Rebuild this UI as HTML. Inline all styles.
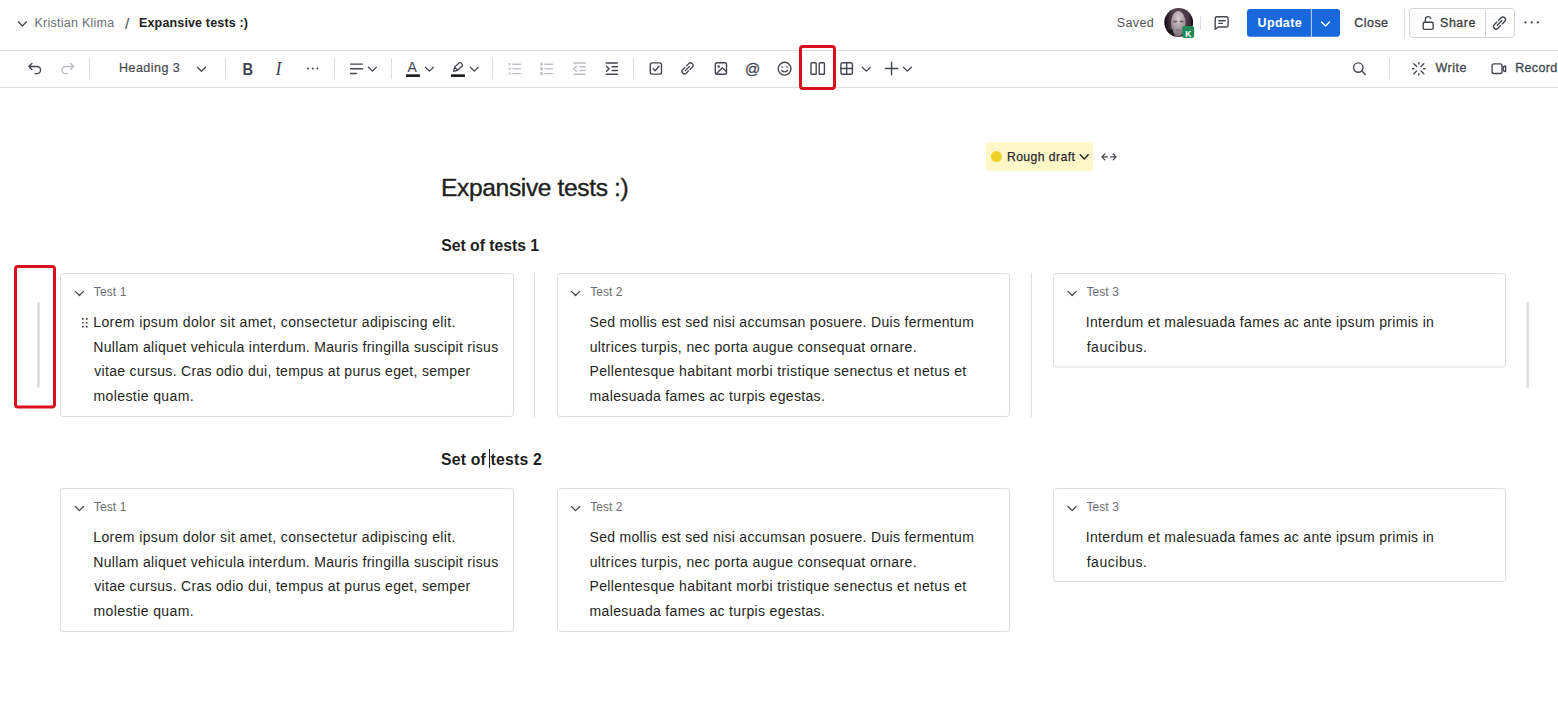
<!DOCTYPE html>
<html lang="en"><head><meta charset="utf-8"><title>Expansive tests :)</title>
<style>
html,body{margin:0;padding:0;background:#fff;}
body{width:1558px;height:704px;position:relative;overflow:hidden;font-family:"Liberation Sans",sans-serif;}
.t{position:absolute;white-space:pre;font-family:"Liberation Sans",sans-serif;}
svg#art{position:absolute;left:0;top:0;width:1558px;height:704px;}
svg#art text{font-family:"Liberation Sans",sans-serif;}
.ic{fill:none;stroke:#44474f;stroke-width:1.4;stroke-linecap:round;stroke-linejoin:round;}
.dis{fill:none;stroke:#bcbec4;stroke-width:1.4;stroke-linecap:round;stroke-linejoin:round;}
.sep{stroke:#dddddf;stroke-width:1;fill:none;}
.card{fill:#fff;stroke:#dcdcdd;stroke-width:1;}
.red{fill:none;stroke:#d9111f;stroke-width:3;}
.ch{stroke-width:1.3;}

</style></head>
<body>
<svg id="art" width="1558" height="704" viewBox="0 0 1558 704">
<!-- bars -->
<path class="sep" d="M0 50.5H1558M0 87.5H1558"/>
<!-- breadcrumb chevron -->
<path class="ic" d="M18.4 21.8 L22.4 25.9 L26.4 21.8"/>
<!-- avatar -->
<defs>
<clipPath id="avc"><circle cx="1178.7" cy="22.5" r="14.4"/></clipPath>
<linearGradient id="avbg" x1="0" y1="0" x2="1" y2="0"><stop offset="0" stop-color="#0c080c"/><stop offset="0.12" stop-color="#2b2029"/><stop offset="0.3" stop-color="#55444f"/><stop offset="0.8" stop-color="#4a3a46"/><stop offset="0.95" stop-color="#1a1218"/><stop offset="1" stop-color="#0c080c"/></linearGradient>
<radialGradient id="face" cx="0.5" cy="0.3" r="0.7"><stop offset="0" stop-color="#d6cdd1"/><stop offset="0.45" stop-color="#b4a7ad"/><stop offset="1" stop-color="#7d6f77"/></radialGradient>
</defs>
<g clip-path="url(#avc)">
<rect x="1164" y="8" width="30" height="30" fill="url(#avbg)"/>
<ellipse cx="1178.3" cy="23.5" rx="7.3" ry="12.6" fill="url(#face)"/>
<ellipse cx="1175.2" cy="21.6" rx="2.1" ry="1" fill="#5d5058" opacity="0.85"/>
<ellipse cx="1181.6" cy="21.6" rx="2.1" ry="1" fill="#5d5058" opacity="0.85"/>
<ellipse cx="1178.6" cy="30.2" rx="2.6" ry="0.8" fill="#6f6068" opacity="0.7"/>
<path d="M1164 30 L1172.5 29.5 L1175 38 L1164 38 Z" fill="#1c171d"/>
</g>
<rect x="1182.2" y="25.9" width="12" height="12.1" rx="2.5" fill="#20895b"/>
<path class="sep" d="M1200.5 16V30"/>
<!-- comment icon -->
<path class="ic" d="M1215.2 18.6 a1.8 1.8 0 0 1 1.8 -1.8 h9.3 a1.8 1.8 0 0 1 1.8 1.8 v6.6 a1.8 1.8 0 0 1 -1.8 1.8 h-7.9 l-3.2 2.3 z M1218.8 20.7 h6.4 M1218.8 23.4 h3.6"/>
<!-- update button -->
<rect x="1247" y="9" width="93" height="27.8" rx="3" fill="#1868db"/>
<rect x="1310.9" y="9" width="1" height="27.8" fill="#bcd2f5"/>
<path d="M1321.5 22 L1325.5 26 L1329.5 22" fill="none" stroke="#fff" stroke-width="1.4" stroke-linecap="round" stroke-linejoin="round"/>
<path class="sep" d="M1404.5 9V37"/>
<!-- share box -->
<rect x="1409.5" y="8.5" width="105" height="29" rx="3.5" fill="#fff" stroke="#d4d5d8"/>
<path d="M1485.5 10V37" stroke="#d4d5d8" fill="none"/>
<path class="ic" d="M1424.6 22.2 h7.2 a1.4 1.4 0 0 1 1.4 1.4 v4.4 a1.4 1.4 0 0 1 -1.4 1.4 h-7.2 a1.4 1.4 0 0 1 -1.4 -1.4 v-4.4 a1.4 1.4 0 0 1 1.4 -1.4 z M1425.4 22 v-2.6 a2.8 2.8 0 0 1 5.4 -1"/>
<g transform="translate(1499.5 23.1) rotate(-45)"><path class="ic" d="M-1.2 -2.6 h-3.6 a2.6 2.6 0 0 0 0 5.2 h3.6 M1.2 2.6 h3.6 a2.6 2.6 0 0 0 0 -5.2 h-3.6 M-3.2 0 h6.4" /></g>
<g fill="#44474f"><circle cx="1525.5" cy="22.4" r="1.15"/><circle cx="1531.7" cy="22.4" r="1.15"/><circle cx="1537.8" cy="22.4" r="1.15"/></g>

<!-- toolbar -->
<path class="ic" d="M31.9 63.6 L28.9 66.5 L31.9 69.4 M29.2 66.5 H37 a3.55 3.55 0 0 1 0 7.1 H35"/>
<path class="dis" d="M70.6 63.6 L73.6 66.5 L70.6 69.4 M73.3 66.5 H65.5 a3.55 3.55 0 0 0 0 7.1 H67.5"/>
<path class="sep" d="M89.5 58V79M225.5 58V79M334.5 58V79M391.5 58V79M492.5 58V79M633.5 58V79M1389.5 58V79"/>
<path class="ic ch" d="M197.4 67.3 L201.5 71.2 L205.6 67.3"/>
<text x="242.6" y="74.6" font-size="16.6" font-weight="700" fill="#44474f" textLength="10.6" lengthAdjust="spacingAndGlyphs">B</text>
<text x="275.6" y="74.6" font-size="18" font-style="italic" fill="#44474f" style="font-family:'Liberation Serif',serif">I</text>
<g fill="#44474f"><circle cx="308" cy="68.5" r="1"/><circle cx="312.7" cy="68.5" r="1"/><circle cx="317.4" cy="68.5" r="1"/></g>
<path class="ic" d="M350.6 64.1 H362.6 M350.6 68.8 H362.6 M350.6 73.5 H356.4"/>
<path class="ic ch" d="M368.5 67.3 L372.4 71.1 L376.3 67.3"/>
<text x="407.6" y="71.6" font-size="14" fill="#44474f">A</text>
<rect x="406" y="74.3" width="13.9" height="2.7" fill="#1e1f21"/>
<path class="ic ch" d="M425.5 67.3 L429.4 71.1 L433.3 67.3"/>
<!-- highlighter -->
<path class="ic" style="stroke-width:1.25" d="M453.6 71.4 L454.7 66.9 L459.3 62.8 a1.1 1.1 0 0 1 1.6 0.1 L462.2 64.4 a1.1 1.1 0 0 1 -0.1 1.6 L457.6 70.3 Z M454.7 66.9 L457.6 70.3"/>
<rect x="451" y="74.3" width="13.9" height="2.7" fill="#1e1f21"/>
<path class="ic ch" d="M470.4 67.3 L474.3 71.1 L478.2 67.3"/>
<!-- bullets -->
<g fill="#bcbec4"><circle cx="509.5" cy="64.2" r="1.1"/><circle cx="509.5" cy="68.9" r="1.1"/><circle cx="509.5" cy="73.6" r="1.1"/></g>
<path class="dis" d="M512.9 64.2 H520.4 M512.9 68.9 H520.4 M512.9 73.6 H520.4"/>
<g fill="#bcbec4"><rect x="540.4" y="62.4" width="2.2" height="3.4" rx="0.6"/><rect x="540.4" y="67.1" width="2.2" height="3.4" rx="0.6"/><rect x="540.4" y="71.9" width="2.2" height="3.4" rx="0.6"/></g>
<path class="dis" d="M544.9 64.2 H552.4 M544.9 68.9 H552.4 M544.9 73.6 H552.4"/>
<path class="dis" d="M573.8 63 H585.2 M580 66.8 H585.2 M580 70.5 H585.2 M573.8 74.3 H585.2 M576.4 66.2 L573.7 68.7 L576.4 71.2"/>
<path class="ic" d="M606.2 63 H617.4 M612.2 66.8 H617.4 M612.2 70.5 H617.4 M606.2 74.3 H617.4 M606.4 66.2 L609.1 68.7 L606.4 71.2"/>
<!-- checkbox -->
<rect class="ic" x="650.3" y="62.9" width="11.2" height="11.2" rx="1.8"/>
<path class="ic" d="M653.2 68.7 L655.2 70.7 L658.9 66.3"/>
<g transform="translate(687.5 68.4) rotate(-45)"><path class="ic" style="stroke-width:1.3" d="M-1.2 -2.5 h-3.1 a2.5 2.5 0 0 0 0 5 h3.1 M1.2 2.5 h3.1 a2.5 2.5 0 0 0 0 -5 h-3.1 M-2.9 0 h5.8"/></g>
<rect class="ic" x="715.3" y="62.8" width="11.2" height="11.4" rx="1.8"/>
<circle cx="718.6" cy="66.5" r="1.25" fill="#44474f"/>
<path class="ic" d="M716.6 73.6 L722.4 67.8 L726.3 71.6"/>
<text x="745.1" y="73.6" font-size="15" fill="#44474f" stroke="#44474f" stroke-width="0.3">@</text>
<circle class="ic" cx="784.6" cy="68.7" r="6.4"/>
<g fill="#44474f"><circle cx="782.4" cy="67" r="0.85"/><circle cx="786.9" cy="67" r="0.85"/></g>
<path class="ic" d="M781.7 70.4 Q784.6 73.4 787.6 70.4"/>
<rect class="ic" x="811" y="62.8" width="5.2" height="11.5" rx="0.8"/>
<rect class="ic" x="819.2" y="62.8" width="5.2" height="11.5" rx="0.8"/>
<rect class="red" x="800.5" y="46.5" width="34" height="42" rx="2.5"/>
<rect class="ic" x="840.9" y="62.8" width="11.5" height="11.5" rx="1.8"/>
<path class="ic" d="M846.65 62.8 V74.3 M840.9 68.55 H852.4"/>
<path class="ic ch" d="M862.3 67.2 L866.3 71.1 L870.3 67.2"/>
<path class="ic" d="M885.4 68.5 H897.7 M891.55 62.3 V74.7"/>
<path class="ic ch" d="M903.4 67.2 L907.4 71.1 L911.4 67.2"/>
<circle class="ic" cx="1358.3" cy="67.6" r="4.7"/>
<path class="ic" d="M1361.8 71.1 L1365.3 74.5"/>
<!-- write icon -->
<g transform="translate(1418.8 68.8)"><path class="ic" d="M0 -6.2 V-4.8 M0 6.2 V4.8 M-6.2 0 H-4.8 M6.2 0 H4.8 M-5 -5 L-2.2 -2.2 M5 -5 L2.2 -2.2 M-5 5 L-2.2 2.2 M5 5 L2.2 2.2"/></g>
<!-- record -->
<rect class="ic" x="1492.1" y="63.9" width="9.9" height="9.6" rx="1.8"/>
<path class="ic" d="M1503.2 67 L1505.6 65.9 V71.6 L1503.2 70.5 Z"/>

<!-- content -->
<rect x="986" y="142" width="107" height="29" rx="3" fill="#fef7c8"/>
<circle cx="996.4" cy="156.5" r="5.5" fill="#eed12b"/>
<path d="M1080.2 154.8 L1084.2 158.9 L1088.2 154.8" fill="none" stroke="#292a2e" stroke-width="1.5" stroke-linecap="round" stroke-linejoin="round"/>
<path class="ic" style="stroke-width:1.2" d="M1107.4 156.9 H1102.2 M1104.8 154 L1101.9 156.9 L1104.8 159.8 M1110.6 156.9 H1115.8 M1113.2 154 L1116.1 156.9 L1113.2 159.8"/>

<!-- row 1 -->
<rect class="red" x="15.5" y="266.5" width="39" height="140.5" rx="2.5"/>
<rect x="37.2" y="302" width="2.6" height="85.7" rx="1.3" fill="#dddddd"/>
<rect x="1526.4" y="302" width="2.6" height="85.7" rx="1.3" fill="#dddddd"/>
<path d="M534.5 273V417 M1031.5 273V417" stroke="#dedede" fill="none"/>
<rect class="card" x="60.5" y="273.5" width="453" height="143" rx="3"/>
<rect class="card" x="557.5" y="273.5" width="452" height="143" rx="3"/>
<rect class="card" x="1053.5" y="273.5" width="452" height="93.5" rx="3"/>
<path class="ic" style="stroke-width:1.25" d="M75.3 291.4 L79.4 295.5 L83.5 291.4 M571.5 291.4 L575.6 295.5 L579.7 291.4 M1068 291.4 L1072.1 295.5 L1076.2 291.4"/>
<g fill="#33353a"><rect x="82" y="318" width="1.7" height="1.7" rx="0.5"/><rect x="85.9" y="318" width="1.7" height="1.7" rx="0.5"/><rect x="82" y="321.9" width="1.7" height="1.7" rx="0.5"/><rect x="85.9" y="321.9" width="1.7" height="1.7" rx="0.5"/><rect x="82" y="325.8" width="1.7" height="1.7" rx="0.5"/><rect x="85.9" y="325.8" width="1.7" height="1.7" rx="0.5"/></g>
<!-- row 2 -->
<rect class="card" x="60.5" y="488.5" width="453" height="143" rx="3"/>
<rect class="card" x="557.5" y="488.5" width="452" height="143" rx="3"/>
<rect class="card" x="1053.5" y="488.5" width="452" height="93" rx="3"/>
<path class="ic" style="stroke-width:1.25" d="M75.3 506.5 L79.4 510.6 L83.5 506.5 M571.5 506.5 L575.6 510.6 L579.7 506.5 M1068 506.5 L1072.1 510.6 L1076.2 506.5"/>
<rect x="489" y="449" width="1" height="18.6" fill="#1e1f21"/>
</svg>

<span class="t" id="bc1" style="left:34.42px;top:16px;font-size:12.5px;line-height:14px;font-weight:400;color:#6b6e76;letter-spacing:0.258px;">Kristian Klima</span>
<span class="t" id="bc2" style="left:125.03px;top:15px;font-size:15.4px;line-height:17px;font-weight:400;color:#44474f;letter-spacing:0.000px;">/</span>
<span class="t" id="bc3" style="left:138.99px;top:16px;font-size:12.5px;line-height:14px;font-weight:700;color:#1e1f21;letter-spacing:0.156px;">Expansive tests :)</span>
<span class="t" id="saved" style="left:1116.83px;top:16px;font-size:12.5px;line-height:14px;font-weight:400;color:#505258;letter-spacing:0.360px;">Saved</span>
<span class="t" id="upd" style="left:1257.55px;top:16px;font-size:12.5px;line-height:14px;font-weight:700;color:#ffffff;letter-spacing:0.343px;">Update</span>
<span class="t" id="close" style="left:1354.27px;top:16px;font-size:12.5px;line-height:14px;font-weight:400;color:#3b3d42;letter-spacing:0.452px;-webkit-text-stroke:0.3px #3b3d42;">Close</span>
<span class="t" id="share" style="left:1440.06px;top:16px;font-size:12.5px;line-height:14px;font-weight:400;color:#3b3d42;letter-spacing:0.508px;-webkit-text-stroke:0.3px #3b3d42;">Share</span>
<span class="t" id="badge" style="left:1185.24px;top:29px;font-size:8.4px;line-height:10px;font-weight:700;color:#ffffff;letter-spacing:0.000px;">K</span>
<span class="t" id="h3sel" style="left:118.97px;top:61px;font-size:12.5px;line-height:14px;font-weight:400;color:#44474f;letter-spacing:0.479px;-webkit-text-stroke:0.2px #44474f;">Heading 3</span>
<span class="t" id="write" style="left:1435.39px;top:61px;font-size:12.5px;line-height:14px;font-weight:400;color:#44474f;letter-spacing:0.563px;-webkit-text-stroke:0.3px #44474f;">Write</span>
<span class="t" id="record" style="left:1515.17px;top:61px;font-size:12.5px;line-height:14px;font-weight:400;color:#44474f;letter-spacing:0.335px;-webkit-text-stroke:0.3px #44474f;">Record</span>
<span class="t" id="rough" style="left:1006.90px;top:150px;font-size:12.2px;line-height:14px;font-weight:400;color:#292a2e;letter-spacing:0.441px;-webkit-text-stroke:0.25px #292a2e;">Rough draft</span>
<span class="t" id="title" style="left:441.10px;top:174px;font-size:24.6px;line-height:27px;font-weight:400;color:#1e1f21;letter-spacing:-0.383px;-webkit-text-stroke:0.35px #1e1f21;">Expansive tests :)</span>
<span class="t" id="set1" style="left:441.25px;top:237px;font-size:15.8px;line-height:17px;font-weight:700;color:#1e1f21;letter-spacing:-0.036px;">Set of tests 1</span>
<span class="t" id="set2" style="left:441.01px;top:451px;font-size:15.8px;line-height:17px;font-weight:700;color:#1e1f21;letter-spacing:0.187px;">Set of tests 2</span>
<span class="t" id="lab00" style="left:93.83px;top:285px;font-size:12px;line-height:14px;font-weight:400;color:#6b6e76;letter-spacing:0.103px;">Test 1</span>
<span class="t" id="p000" style="left:93.28px;top:314px;font-size:14px;line-height:16px;font-weight:400;color:#1e1f21;letter-spacing:0.389px;">Lorem ipsum dolor sit amet, consectetur adipiscing elit.</span>
<span class="t" id="p001" style="left:93.28px;top:339px;font-size:14px;line-height:16px;font-weight:400;color:#1e1f21;letter-spacing:0.321px;">Nullam aliquet vehicula interdum. Mauris fringilla suscipit risus</span>
<span class="t" id="p002" style="left:94.29px;top:363px;font-size:14px;line-height:16px;font-weight:400;color:#1e1f21;letter-spacing:0.306px;">vitae cursus. Cras odio dui, tempus at purus eget, semper</span>
<span class="t" id="p003" style="left:93.44px;top:388px;font-size:14px;line-height:16px;font-weight:400;color:#1e1f21;letter-spacing:0.409px;">molestie quam.</span>
<span class="t" id="lab01" style="left:590.20px;top:285px;font-size:12px;line-height:14px;font-weight:400;color:#6b6e76;letter-spacing:0.066px;">Test 2</span>
<span class="t" id="p010" style="left:589.51px;top:314px;font-size:14px;line-height:16px;font-weight:400;color:#1e1f21;letter-spacing:0.310px;">Sed mollis est sed nisi accumsan posuere. Duis fermentum</span>
<span class="t" id="p011" style="left:589.70px;top:339px;font-size:14px;line-height:16px;font-weight:400;color:#1e1f21;letter-spacing:0.381px;">ultrices turpis, nec porta augue consequat ornare.</span>
<span class="t" id="p012" style="left:589.49px;top:363px;font-size:14px;line-height:16px;font-weight:400;color:#1e1f21;letter-spacing:0.369px;">Pellentesque habitant morbi tristique senectus et netus et</span>
<span class="t" id="p013" style="left:589.62px;top:388px;font-size:14px;line-height:16px;font-weight:400;color:#1e1f21;letter-spacing:0.337px;">malesuada fames ac turpis egestas.</span>
<span class="t" id="lab02" style="left:1086.39px;top:285px;font-size:12px;line-height:14px;font-weight:400;color:#6b6e76;letter-spacing:0.096px;">Test 3</span>
<span class="t" id="p020" style="left:1085.81px;top:314px;font-size:14px;line-height:16px;font-weight:400;color:#1e1f21;letter-spacing:0.316px;">Interdum et malesuada fames ac ante ipsum primis in</span>
<span class="t" id="p021" style="left:1086.63px;top:339px;font-size:14px;line-height:16px;font-weight:400;color:#1e1f21;letter-spacing:0.538px;">faucibus.</span>
<span class="t" id="lab10" style="left:93.83px;top:500px;font-size:12px;line-height:14px;font-weight:400;color:#6b6e76;letter-spacing:0.103px;">Test 1</span>
<span class="t" id="p100" style="left:93.28px;top:529px;font-size:14px;line-height:16px;font-weight:400;color:#1e1f21;letter-spacing:0.389px;">Lorem ipsum dolor sit amet, consectetur adipiscing elit.</span>
<span class="t" id="p101" style="left:93.28px;top:554px;font-size:14px;line-height:16px;font-weight:400;color:#1e1f21;letter-spacing:0.321px;">Nullam aliquet vehicula interdum. Mauris fringilla suscipit risus</span>
<span class="t" id="p102" style="left:94.29px;top:578px;font-size:14px;line-height:16px;font-weight:400;color:#1e1f21;letter-spacing:0.306px;">vitae cursus. Cras odio dui, tempus at purus eget, semper</span>
<span class="t" id="p103" style="left:93.44px;top:603px;font-size:14px;line-height:16px;font-weight:400;color:#1e1f21;letter-spacing:0.409px;">molestie quam.</span>
<span class="t" id="lab11" style="left:590.20px;top:500px;font-size:12px;line-height:14px;font-weight:400;color:#6b6e76;letter-spacing:0.066px;">Test 2</span>
<span class="t" id="p110" style="left:589.51px;top:529px;font-size:14px;line-height:16px;font-weight:400;color:#1e1f21;letter-spacing:0.310px;">Sed mollis est sed nisi accumsan posuere. Duis fermentum</span>
<span class="t" id="p111" style="left:589.70px;top:554px;font-size:14px;line-height:16px;font-weight:400;color:#1e1f21;letter-spacing:0.381px;">ultrices turpis, nec porta augue consequat ornare.</span>
<span class="t" id="p112" style="left:589.49px;top:578px;font-size:14px;line-height:16px;font-weight:400;color:#1e1f21;letter-spacing:0.369px;">Pellentesque habitant morbi tristique senectus et netus et</span>
<span class="t" id="p113" style="left:589.62px;top:603px;font-size:14px;line-height:16px;font-weight:400;color:#1e1f21;letter-spacing:0.337px;">malesuada fames ac turpis egestas.</span>
<span class="t" id="lab12" style="left:1086.39px;top:500px;font-size:12px;line-height:14px;font-weight:400;color:#6b6e76;letter-spacing:0.096px;">Test 3</span>
<span class="t" id="p120" style="left:1085.81px;top:529px;font-size:14px;line-height:16px;font-weight:400;color:#1e1f21;letter-spacing:0.316px;">Interdum et malesuada fames ac ante ipsum primis in</span>
<span class="t" id="p121" style="left:1086.63px;top:554px;font-size:14px;line-height:16px;font-weight:400;color:#1e1f21;letter-spacing:0.538px;">faucibus.</span>
</body></html>
